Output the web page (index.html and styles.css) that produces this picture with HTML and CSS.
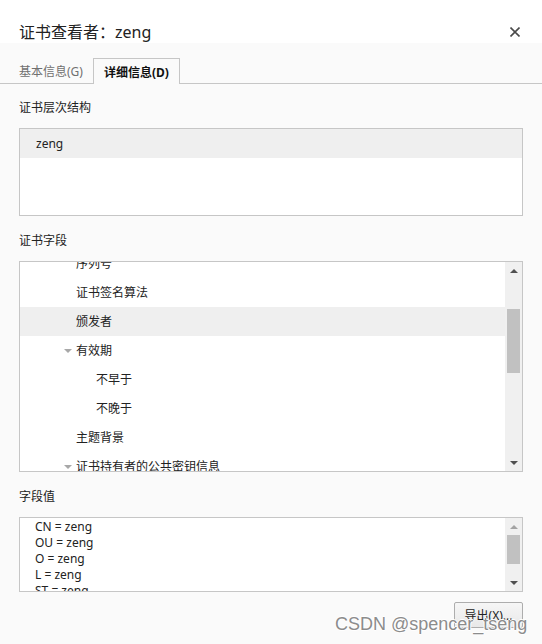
FILE: index.html
```html
<!DOCTYPE html>
<html lang="zh-CN">
<head>
<meta charset="utf-8">
<title>证书查看者：zeng</title>
<link rel="stylesheet" href="styles.css">
</head>
<body>
<div class="dialog">
  <header class="titlebar">
    <h1 class="title">证书查看者：zeng</h1>
    <span class="close" aria-label="关闭">
      <svg width="10" height="10" viewBox="0 0 10 10"><path d="M0.5 0.5 L9.5 9.5 M9.5 0.5 L0.5 9.5" stroke="#4a4a4a" stroke-width="1.6" fill="none"/></svg>
    </span>
  </header>
  <main class="content">
    <nav class="tabbar">
      <span class="tab">基本信息(G)</span>
      <span class="tab active">详细信息(D)</span>
    </nav>
    <section class="panel">
      <div class="label">证书层次结构</div>
      <div class="box hierarchy">
        <div class="hrow selected">zeng</div>
      </div>

      <div class="label">证书字段</div>
      <div class="box fields">
        <div class="tree">
          <div class="trow l1"><span class="tog"></span>序列号</div>
          <div class="trow l1"><span class="tog"></span>证书签名算法</div>
          <div class="trow l1 selected"><span class="tog"></span>颁发者</div>
          <div class="trow l1"><span class="tog open"></span>有效期</div>
          <div class="trow l2">不早于</div>
          <div class="trow l2">不晚于</div>
          <div class="trow l1"><span class="tog"></span>主题背景</div>
          <div class="trow l1"><span class="tog open"></span>证书持有者的公共密钥信息</div>
        </div>
        <div class="scrollbar">
          <div class="sbtn"><span class="arrow up"></span></div>
          <div class="track"><div class="thumb big"></div></div>
          <div class="sbtn"><span class="arrow down"></span></div>
        </div>
      </div>

      <div class="label">字段值</div>
      <div class="box values">
        <div class="vlines">
          <div class="vline">CN = zeng</div>
          <div class="vline">OU = zeng</div>
          <div class="vline">O = zeng</div>
          <div class="vline">L = zeng</div>
          <div class="vline">ST = zeng</div>
        </div>
        <div class="scrollbar">
          <div class="sbtn"><span class="arrow up dim"></span></div>
          <div class="track"><div class="thumb small"></div></div>
          <div class="sbtn"><span class="arrow down"></span></div>
        </div>
      </div>

      <div class="actions">
        <button class="btn" type="button">导出(X)...</button>
      </div>
    </section>
  </main>
  <div class="watermark">CSDN @spencer_tseng</div>
</div>
</body>
</html>
```

FILE: styles.css
```css
* { box-sizing: border-box; }

html, body {
  margin: 0;
  padding: 0;
}

body {
  width: 542px;
  height: 644px;
  overflow: hidden;
  font-family: "Noto Sans", "Noto Sans CJK SC", sans-serif;
  font-size: 12px;
  color: #222;
  background: #fafafa;
}

.dialog {
  position: relative;
  width: 542px;
  height: 644px;
  display: flex;
  flex-direction: column;
}

.titlebar {
  height: 43px;
  background: #ffffff;
  padding: 20px 22px 0 19px;
  display: flex;
  align-items: center;
  justify-content: space-between;
}

.title {
  margin: 0;
  font-size: 16px;
  font-weight: normal;
  line-height: 22px;
  color: #222;
}

.close {
  width: 10px;
  height: 10px;
  display: flex;
}

.content {
  flex: 1;
  background: #fafafa;
  padding-top: 15px;
}

.tabbar {
  height: 26px;
  display: flex;
  align-items: flex-end;
  border-bottom: 1px solid #c6c6c6;
  padding-left: 19px;
}

.tab {
  line-height: 18px;
  padding-bottom: 2px;
  color: #707070;
  margin-right: 10px;
}

.tab.active {
  height: 26px;
  margin-bottom: -1px;
  padding: 5px 10px 2px 10px;
  border: 1px solid #c6c6c6;
  border-bottom: none;
  background: #fafafa;
  color: #111;
  font-weight: bold;
  margin-right: 0;
}

.panel {
  padding: 0 20px 0 19px;
}

.label {
  line-height: 18px;
  margin-top: 15px;
  margin-bottom: 11px;
  color: #222;
}

.panel .label ~ .label { margin-top: 16px; }

.box {
  background: #ffffff;
  border: 1px solid #c6c6c6;
  width: 504px;
}

.hierarchy {
  height: 88px;
}

.hrow {
  height: 29px;
  line-height: 29px;
  padding-left: 16px;
}

.selected { background: #efefef; }

.fields {
  height: 211px;
  display: flex;
  overflow: hidden;
}

.tree {
  flex: 1;
  overflow: hidden;
}

.tree .trow:first-child { margin-top: -13px; }

.trow {
  height: 29px;
  line-height: 29px;
  display: flex;
  align-items: center;
  white-space: nowrap;
}

.trow.l1 { padding-left: 44px; }
.trow.l2 { padding-left: 76px; }

.tog {
  width: 12px;
  height: 29px;
  display: flex;
  align-items: center;
}

.tog.open::before {
  content: "";
  display: block;
  width: 0;
  height: 0;
  border-left: 4px solid transparent;
  border-right: 4px solid transparent;
  border-top: 4px solid #a8a8a8;
  margin-top: 1px;
}

.scrollbar {
  width: 17px;
  background: #f0f0f0;
  display: flex;
  flex-direction: column;
}

.sbtn {
  height: 17px;
  display: flex;
  align-items: center;
  justify-content: center;
}

.track {
  flex: 1;
  padding: 0 1px 0 2px;
}

.thumb {
  background: #c1c1c1;
  width: 13px;
}

.thumb.big { margin-top: 30px; height: 64px; }
.thumb.small { margin-top: 0; height: 29px; }

.arrow {
  width: 0;
  height: 0;
  border-left: 4px solid transparent;
  border-right: 4px solid transparent;
}

.arrow.up { border-bottom: 4px solid #505050; }
.arrow.down { border-top: 4px solid #505050; }
.arrow.up.dim { border-bottom-color: #a3a3a3; }

.values {
  height: 75px;
  display: flex;
  overflow: hidden;
}

.vlines {
  flex: 1;
  padding: 1px 0 0 15px;
  overflow: hidden;
}

.vline {
  line-height: 16px;
  height: 16px;
  white-space: nowrap;
}

.actions {
  width: 504px;
  display: flex;
  justify-content: flex-end;
  margin-top: 10px;
}

.btn {
  width: 69px;
  height: 26px;
  font-family: "Noto Sans", "Noto Sans CJK SC", sans-serif;
  font-size: 12px;
  color: #222;
  background: linear-gradient(#f6f6f6, #e8e8e8);
  border: 1px solid #adadad;
  border-radius: 2px;
  padding: 0;
}

.watermark {
  position: absolute;
  left: 335px;
  top: 615px;
  font-family: "Liberation Sans", Arial, sans-serif;
  font-size: 18px;
  line-height: 18px;
  color: #8c8c8c;
  white-space: nowrap;
  text-shadow: 1px 0 0 #fff, -1px 0 0 #fff, 0 1px 0 #fff, 0 -1px 0 #fff;
}
```
